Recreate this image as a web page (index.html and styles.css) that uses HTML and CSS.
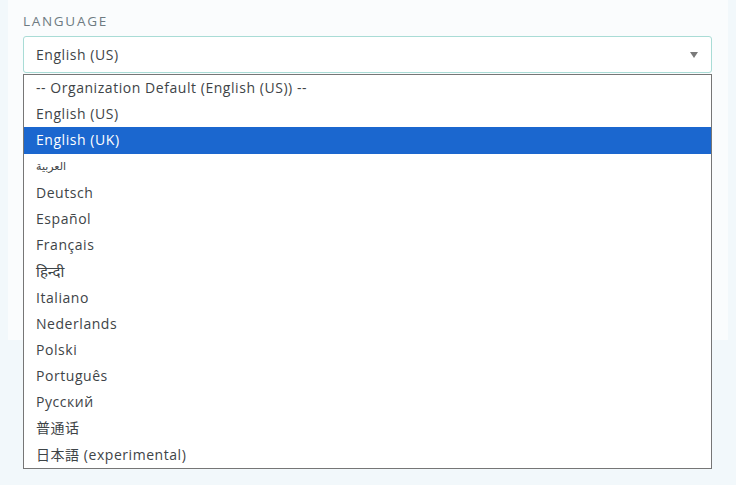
FILE: index.html
```html
<!DOCTYPE html>
<html lang="en">
<head>
<meta charset="utf-8">
<title>Language</title>
<link rel="stylesheet" href="styles.css">
</head>
<body>
<div class="page">
  <div class="card">
    <label class="label">LANGUAGE</label>
    <div class="field">
      <div class="select">
        <span class="value">English (US)</span>
        <svg class="caret" width="8" height="6" viewBox="0 0 8 6"><path d="M0 0 H8 L4 6 Z" fill="#7a7a7a"/></svg>
      </div>
      <ul class="menu">
        <li>-- Organization Default (English (US)) --</li>
        <li>English (US)</li>
        <li class="active">English (UK)</li>
        <li class="ar" lang="ar">العربية</li>
        <li>Deutsch</li>
        <li>Español</li>
        <li>Français</li>
        <li class="hi" lang="hi">हिन्दी</li>
        <li>Italiano</li>
        <li>Nederlands</li>
        <li>Polski</li>
        <li>Português</li>
        <li>Русский</li>
        <li class="cjk" lang="zh">普通话</li>
        <li class="cjk ja" lang="ja">日本語 (experimental)</li>
      </ul>
    </div>
  </div>
</div>
</body>
</html>
```

FILE: styles.css
```css
html, body {
  margin: 0;
  padding: 0;
}
body {
  background: #f2f8fb;
  font-family: "Open Sans", "Noto Sans", "Noto Sans CJK SC", sans-serif;
  width: 736px;
  height: 485px;
  overflow: hidden;
}
.page {
  padding: 0 8px;
}
.card {
  background: #fafcfd;
  height: 340px;
  padding: 13px 15px 0 15px;
  box-sizing: border-box;
}
.label {
  display: block;
  font-size: 13.5px;
  letter-spacing: 1.7px;
  color: #6e7b82;
  line-height: 16px;
  margin-bottom: 7px;
}
.field {
  position: relative;
  width: 689px;
}
.select {
  height: 37px;
  box-sizing: border-box;
  border: 1px solid #a9dcd6;
  border-radius: 3px;
  background: #fff;
  display: flex;
  align-items: center;
  justify-content: space-between;
  padding: 0 13px 0 12px;
}
.value {
  font-size: 14px;
  letter-spacing: 0.55px;
  color: #3e4447;
}
.caret {
  display: block;
  margin-top: 1px;
}
.menu {
  position: absolute;
  left: 0;
  top: 38px;
  width: 689px;
  box-sizing: border-box;
  margin: 0;
  padding: 0;
  list-style: none;
  background: #fff;
  border: 1px solid #767676;
}
.menu li {
  height: 26.2px;
  line-height: 26.2px;
  padding-left: 12px;
  font-size: 14px;
  letter-spacing: 0.55px;
  color: #3e4447;
  white-space: nowrap;
}
.menu li.active {
  background: #1b67cf;
  color: #fff;
}
.menu li.ar {
  font-family: "DejaVu Sans", "Noto Sans", sans-serif;
  font-size: 11px;
  letter-spacing: 0;
}
.menu li.hi {
  font-size: 15px;
  letter-spacing: 0;
}
.menu li.cjk {
  font-family: "Open Sans", "Noto Sans CJK SC", sans-serif;
}
.menu li.ja {
  font-family: "Open Sans", "Noto Sans CJK JP", sans-serif;
}
```
